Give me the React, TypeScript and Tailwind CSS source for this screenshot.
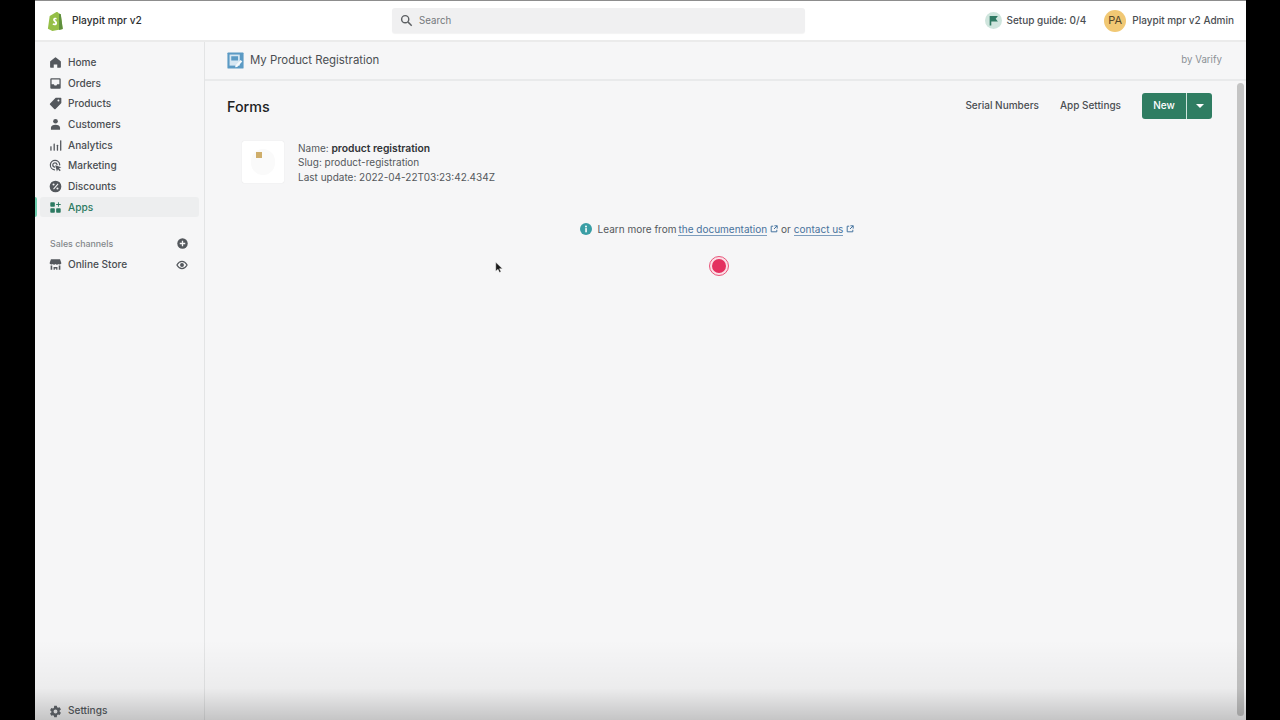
import type { ReactNode } from "react";

type IconProps = { className?: string };

function HomeIcon({ className }: IconProps) {
  return (
    <svg viewBox="0 0 20 20" className={className} fill="currentColor">
      <path d="M18 8.2 10.7 2.3a1 1 0 0 0-1.4 0L2 8.2a1 1 0 0 0-.3.7V17a1 1 0 0 0 1 1h4.6v-5h5.4v5h4.6a1 1 0 0 0 1-1V8.9a1 1 0 0 0-.3-.7z" />
    </svg>
  );
}

function OrdersIcon({ className }: IconProps) {
  return (
    <svg viewBox="0 0 20 20" className={className} fill="currentColor">
      <path fillRule="evenodd" d="M3.5 2A1.5 1.5 0 0 0 2 3.5v13A1.5 1.5 0 0 0 3.5 18h13a1.5 1.5 0 0 0 1.5-1.5v-13A1.5 1.5 0 0 0 16.5 2h-13zM4 4h12v7h-3.5l-1 2h-3l-1-2H4V4z" />
    </svg>
  );
}

function TagIcon({ className }: IconProps) {
  return (
    <svg viewBox="0 0 20 20" className={className} fill="currentColor">
      <path fillRule="evenodd" d="M11 1h7a1 1 0 0 1 1 1v7a1 1 0 0 1-.3.7l-8.6 8.6a1.5 1.5 0 0 1-2.1 0l-6.3-6.3a1.5 1.5 0 0 1 0-2.1l8.6-8.6A1 1 0 0 1 11 1zm3.5 6a1.5 1.5 0 1 0 0-3 1.5 1.5 0 0 0 0 3z" />
    </svg>
  );
}

function CustomersIcon({ className }: IconProps) {
  return (
    <svg viewBox="0 0 20 20" className={className} fill="currentColor">
      <circle cx="10" cy="5" r="3.6" />
      <path d="M10 10.5c-4 0-7 1.9-7 4.6V18h14v-2.9c0-2.7-3-4.6-7-4.6z" />
    </svg>
  );
}

function AnalyticsIcon({ className }: IconProps) {
  return (
    <svg viewBox="0 0 20 20" className={className} fill="currentColor">
      <rect x="2" y="11" width="2" height="7" rx="0.6" />
      <rect x="7" y="7" width="2" height="11" rx="0.6" />
      <rect x="12" y="9" width="2" height="9" rx="0.6" />
      <rect x="17" y="2" width="2" height="16" rx="0.6" />
    </svg>
  );
}

function MarketingIcon({ className }: IconProps) {
  return (
    <svg viewBox="0 0 20 20" className={className} fill="none" stroke="currentColor" strokeWidth="1.9">
      <path d="M8.5 16.6a7.2 7.2 0 1 1 8-7.6" strokeLinecap="round" />
      <path d="M8.6 12.4a3.3 3.3 0 1 1 3.8-3.6" strokeLinecap="round" />
      <path d="M9.5 9.5 19 12.6l-3.6 1.8 2.6 3-1.6 1.4-2.6-3-1.6 3.4z" fill="currentColor" stroke="none" />
    </svg>
  );
}

function DiscountIcon({ className }: IconProps) {
  return (
    <svg viewBox="0 0 20 20" className={className} fill="currentColor">
      <path fillRule="evenodd" d="M10 1a9 9 0 1 0 0 18 9 9 0 0 0 0-18zM7 8.6a1.6 1.6 0 1 0 0-3.2 1.6 1.6 0 0 0 0 3.2zm6 6a1.6 1.6 0 1 0 0-3.2 1.6 1.6 0 0 0 0 3.2zm.4-9.2-7 8.2 1.2 1 7-8.2-1.2-1z" />
    </svg>
  );
}

function AppsIcon({ className }: IconProps) {
  return (
    <svg viewBox="0 0 20 20" className={className} fill="currentColor">
      <rect x="2" y="2" width="7" height="7" rx="1.2" />
      <rect x="2" y="11" width="7" height="7" rx="1.2" />
      <rect x="11" y="11" width="7" height="7" rx="1.2" />
      <path d="M13.8 2h1.4v2.8H18v1.4h-2.8V9h-1.4V6.2H11V4.8h2.8z" />
    </svg>
  );
}

function StoreIcon({ className }: IconProps) {
  return (
    <svg viewBox="0 0 20 20" className={className} fill="currentColor">
      <path d="M3 2h14l2 5.5a2.6 2.6 0 0 1-4.5 1.6 3.2 3.2 0 0 1-4.5 0 3.2 3.2 0 0 1-4.5 0A2.6 2.6 0 0 1 1 7.5L3 2z" />
      <path d="M2.5 11.5H5V18H2.5zM15 11.5h2.5V18H15zM7 14h6v4h-2v-2H9v2H7z" />
    </svg>
  );
}

function GearIcon({ className }: IconProps) {
  return (
    <svg viewBox="0 0 20 20" className={className} fill="currentColor">
      <path fillRule="evenodd" d="M8 1h4l.5 2.6 1.5.8 2.4-.9 2 3.4-2 1.7v1.8l2 1.7-2 3.4-2.4-.9-1.5.8L12 19H8l-.5-2.6-1.5-.8-2.4.9-2-3.4 2-1.7V9.6l-2-1.7 2-3.4 2.4.9 1.5-.8L8 1zm2 12a3 3 0 1 0 0-6 3 3 0 0 0 0 6z" />
    </svg>
  );
}

function ExternalIcon() {
  return (
    <svg viewBox="0 0 20 20" className="h-[8px] w-[8px] text-[#3f6f9c]" fill="none" stroke="currentColor" strokeWidth="2.4">
      <path d="M8 3H3v14h14v-5" />
      <path d="M11 2h7v7M18 2l-8 8" />
    </svg>
  );
}

function ShopifyLogo() {
  return (
    <svg viewBox="0 0 20 22" className="h-[20px] w-[18px]">
      <path d="M3 5.5 10.5 1c1 0 2 .4 3 2l1.8.4L17.5 20 6 22 1 19.5z" fill="#95bf47" />
      <path d="M15.3 3.4 17.5 20 13.4 21V2.6z" fill="#5e8e3e" />
      <path d="M10.6 7.8c-.7-.3-1.5-.5-2.2-.3-1.7.4-2.2 2.6-.9 3.8.8.8 1.7 1.2 1.6 2-.1.7-1.2.8-2.4.1l-.5 1.9c1.8 1 4.7.7 5-1.9.2-1.7-1.1-2.5-2-3.3-.5-.4-.6-.9 0-1.1.4-.1.9 0 1.4.2z" fill="#fff" />
    </svg>
  );
}

function NavItem({ icon, label, active }: { icon: ReactNode; label: string; active?: boolean }) {
  return (
    <div className={`relative mb-[0.7px] ml-[5px] mr-[5px] flex h-[20px] items-center pl-[9px] ${active ? "rounded-[3px] bg-[#edeeef] text-[#2c7a62]" : "text-[#4a4e52]"}`}>
      {active && <span className="absolute left-[-5px] top-0 h-full w-[1.5px] rounded-r bg-[#6fcfb0]" />}
      <span className={`flex w-[19px] shrink-0 ${active ? "text-[#2c7a62]" : "text-[#54585d]"}`}>{icon}</span>
      <span className="text-[10.1px] font-medium">{label}</span>
    </div>
  );
}

const navItems = [
  { label: "Home", icon: <HomeIcon className="h-[13px] w-[13px]" /> },
  { label: "Orders", icon: <OrdersIcon className="h-[13px] w-[13px]" /> },
  { label: "Products", icon: <TagIcon className="h-[13px] w-[13px]" /> },
  { label: "Customers", icon: <CustomersIcon className="h-[13px] w-[13px]" /> },
  { label: "Analytics", icon: <AnalyticsIcon className="h-[13px] w-[13px]" /> },
  { label: "Marketing", icon: <MarketingIcon className="h-[13px] w-[13px]" /> },
  { label: "Discounts", icon: <DiscountIcon className="h-[13px] w-[13px]" /> },
];

export default function App() {
  return (
    <div className="relative flex h-screen w-screen overflow-hidden bg-black font-['Inter',sans-serif] text-[#3c4043] antialiased">
      <div className="ml-[35px] flex h-full w-[1211px] flex-col bg-[#f6f6f7]">
        {/* Top bar */}
        <header className="flex h-[42px] shrink-0 items-center border-t border-b-2 border-t-[#8d8d8d] border-b-[#ebebeb] bg-white">
          <div className="flex w-[357px] shrink-0 items-center pl-[12px]">
            <ShopifyLogo />
            <span className="ml-[7px] text-[10.2px] font-medium text-[#2b2e30]">Playpit mpr v2</span>
          </div>
          <div className="flex h-[25px] w-[413px] items-center rounded-[3px] bg-[#f0f0f1] pl-[8px] shadow-[0_1px_1px_rgba(0,0,0,0.05)]">
            <svg viewBox="0 0 20 20" className="h-[13px] w-[13px] text-[#5c5f62]" fill="none" stroke="currentColor" strokeWidth="2.2">
              <circle cx="8" cy="8" r="5.5" />
              <path d="m12.5 12.5 5.5 5.5" />
            </svg>
            <span className="ml-[6px] mt-[1px] text-[9.7px] text-[#74787c]">Search</span>
          </div>
          <div className="ml-auto flex items-center pr-[12px]">
            <span className="flex h-[17px] w-[17px] items-center justify-center rounded-full bg-[#cfe5dd]">
              <svg viewBox="0 0 20 20" className="h-[11px] w-[11px] text-[#2f7a63]" fill="currentColor">
                <path d="M3 2h15l-4 5 4 5H6v7H3z" />
              </svg>
            </span>
            <span className="ml-[4px] text-[10px] font-medium text-[#4a4e52]">Setup guide: 0/4</span>
            <span className="ml-[18px] flex h-[22px] w-[22px] items-center justify-center rounded-full bg-[#f1c874] text-[11px] text-[#54462a]">PA</span>
            <span className="ml-[6px] text-[10px] font-medium text-[#4a4e52]">Playpit mpr v2 Admin</span>
          </div>
        </header>

        <div className="flex min-h-0 flex-1">
          {/* Sidebar */}
          <aside className="flex w-[170px] shrink-0 flex-col border-r border-[#e3e4e5] pt-[10.5px]">
            {navItems.map((item) => (
              <NavItem key={item.label} icon={item.icon} label={item.label} />
            ))}
            <NavItem icon={<AppsIcon className="h-[13px] w-[13px]" />} label="Apps" active />
            <div className="mt-[15.5px] flex h-[20px] items-center justify-between pl-[15px] pr-[16px]">
              <span className="text-[8.8px] font-medium text-[#82868a]">Sales channels</span>
              <svg viewBox="0 0 20 20" className="h-[11px] w-[11px] text-[#54585d]">
                <circle cx="10" cy="10" r="9.5" fill="currentColor" />
                <path d="M10 5v10M5 10h10" stroke="#f6f6f7" strokeWidth="2.4" />
              </svg>
            </div>
            <div className="mt-[1px] flex h-[20px] items-center pl-[14px] pr-[16px]">
              <span className="flex w-[19px] shrink-0 text-[#54585d]">
                <StoreIcon className="h-[13px] w-[13px]" />
              </span>
              <span className="text-[10.1px] font-medium text-[#4a4e52]">Online Store</span>
              <svg viewBox="0 0 20 20" className="ml-auto h-[12px] w-[12px] text-[#54585d]" fill="none" stroke="currentColor" strokeWidth="2">
                <path d="M1.5 10C4 5.8 6.8 4 10 4s6 1.8 8.5 6c-2.5 4.2-5.3 6-8.5 6s-6-1.8-8.5-6z" />
                <circle cx="10" cy="10" r="2.2" fill="currentColor" />
              </svg>
            </div>
            <div className="relative z-10 mb-[-1px] mt-auto flex h-[20px] items-center pl-[14px]">
              <span className="flex w-[19px] shrink-0 text-[#54585d]">
                <GearIcon className="h-[13px] w-[13px]" />
              </span>
              <span className="text-[10.1px] font-medium text-[#4a4e52]">Settings</span>
            </div>
          </aside>

          {/* App frame */}
          <main className="flex min-w-0 flex-1 flex-col">
            <div className="flex h-[39px] shrink-0 items-center border-b-2 border-[#e9eaeb] pl-[22px] pr-[24px]">
              <svg viewBox="0 0 20 20" className="h-[17px] w-[17px]">
                <rect x="0.5" y="0.5" width="19" height="19" rx="1" fill="#5b9ac4" />
                <rect x="3" y="3" width="12" height="13" fill="#d7e7f2" />
                <rect x="5" y="5" width="8" height="5" fill="#5b9ac4" />
                <path d="M10 16 16 9.5l2 1.8-6 6.2-2.4.4z" fill="#f5f9fc" />
              </svg>
              <span className="ml-[6px] text-[11.4px] text-[#4a4e52]">My Product Registration</span>
              <span className="ml-auto text-[9.7px] text-[#8c9196]">by Varify</span>
            </div>

            <div className="flex min-h-0 flex-1">
              <div className="min-w-0 flex-1 pl-[22px] pr-[24px]">
                <div className="flex h-[49px] items-center justify-between">
                  <h1 className="mt-[3px] text-[14.3px] font-medium text-[#202223]">Forms</h1>
                  <div className="flex items-center">
                    <span className="text-[10px] font-medium text-[#4a4e52]">Serial Numbers</span>
                    <span className="ml-[21px] text-[10px] font-medium text-[#4a4e52]">App Settings</span>
                    <div className="ml-[21px] flex h-[26px] items-stretch overflow-hidden rounded-[3px] bg-[#2f7d62] text-white">
                      <span className="flex w-[44px] items-center justify-center text-[10px] font-medium">New</span>
                      <span className="flex w-[26px] items-center justify-center border-l border-[#cfe5dd]">
                        <span className="h-0 w-0 border-x-[4px] border-t-[4px] border-x-transparent border-t-white" />
                      </span>
                    </div>
                  </div>
                </div>

                <div className="mt-[11px] flex items-center pl-[15px]">
                  <div className="flex h-[42px] w-[42px] items-center justify-center rounded-[2px] bg-white shadow-[0_0_1px_rgba(0,0,0,0.15)]">
                    <div className="relative h-[26px] w-[24px] rounded-full bg-[#fafafa]">
                      <span className="absolute left-[5px] top-[3px] h-[6px] w-[6px] bg-[#cfae6b]" />
                    </div>
                  </div>
                  <div className="ml-[14px] text-[10px] leading-[14.3px] text-[#54585c]">
                    <p>
                      Name: <span className="text-[10.3px] font-semibold text-[#303336]">product registration</span>
                    </p>
                    <p>Slug: product-registration</p>
                    <p>Last update: 2022-04-22T03:23:42.434Z</p>
                  </div>
                </div>

                <div className="mt-[38px] flex items-center justify-center pr-[5px] text-[10px] text-[#54585c]">
                  <svg viewBox="0 0 20 20" className="h-[12px] w-[12px] text-[#3a9ea5]">
                    <circle cx="10" cy="10" r="10" fill="currentColor" />
                    <rect x="8.8" y="8.5" width="2.6" height="7" fill="#fff" />
                    <circle cx="10" cy="5.8" r="1.6" fill="#fff" />
                  </svg>
                  <span className="ml-[6px]">Learn more from</span>
                  <span className="ml-[2px] border-b border-[#7d9dbd] leading-[12px] text-[#49729c]">the documentation</span>
                  <span className="ml-[3px] flex">
                    <ExternalIcon />
                  </span>
                  <span className="ml-[3px]">or</span>
                  <span className="ml-[3px] border-b border-[#7d9dbd] leading-[12px] text-[#49729c]">contact us</span>
                  <span className="ml-[3px] flex">
                    <ExternalIcon />
                  </span>
                </div>
              </div>

              {/* Scrollbar */}
              <div className="mr-[1px] flex w-[9px] shrink-0 justify-center pr-[1px]">
                <div className="mb-[4px] mt-[2px] w-[7px] rounded-full bg-[#c4c4c4]" />
              </div>
            </div>
          </main>
        </div>
      </div>

      {/* Bottom fade from the recording */}
      <div className="pointer-events-none absolute bottom-0 left-[35px] h-[80px] w-[1211px] bg-gradient-to-b from-transparent via-black/[0.04] via-60% to-black/20" />

      {/* Recording dot */}
      <div className="absolute left-[709px] top-[256px] flex h-[20px] w-[20px] items-center justify-center rounded-full border border-[#e9557a] bg-[#fbdfe6]">
        <div className="h-[14px] w-[14px] rounded-full bg-[#e4305f]" />
      </div>

      {/* Mouse pointer */}
      <svg viewBox="0 0 12 16" className="absolute left-[495px] top-[261px] h-[13px] w-[9px]">
        <path d="M1 1v12l3-2.6 2 4.4 2-1-2-4.2h4z" fill="#1a1a1a" stroke="#fff" strokeWidth="0.6" />
      </svg>
    </div>
  );
}
